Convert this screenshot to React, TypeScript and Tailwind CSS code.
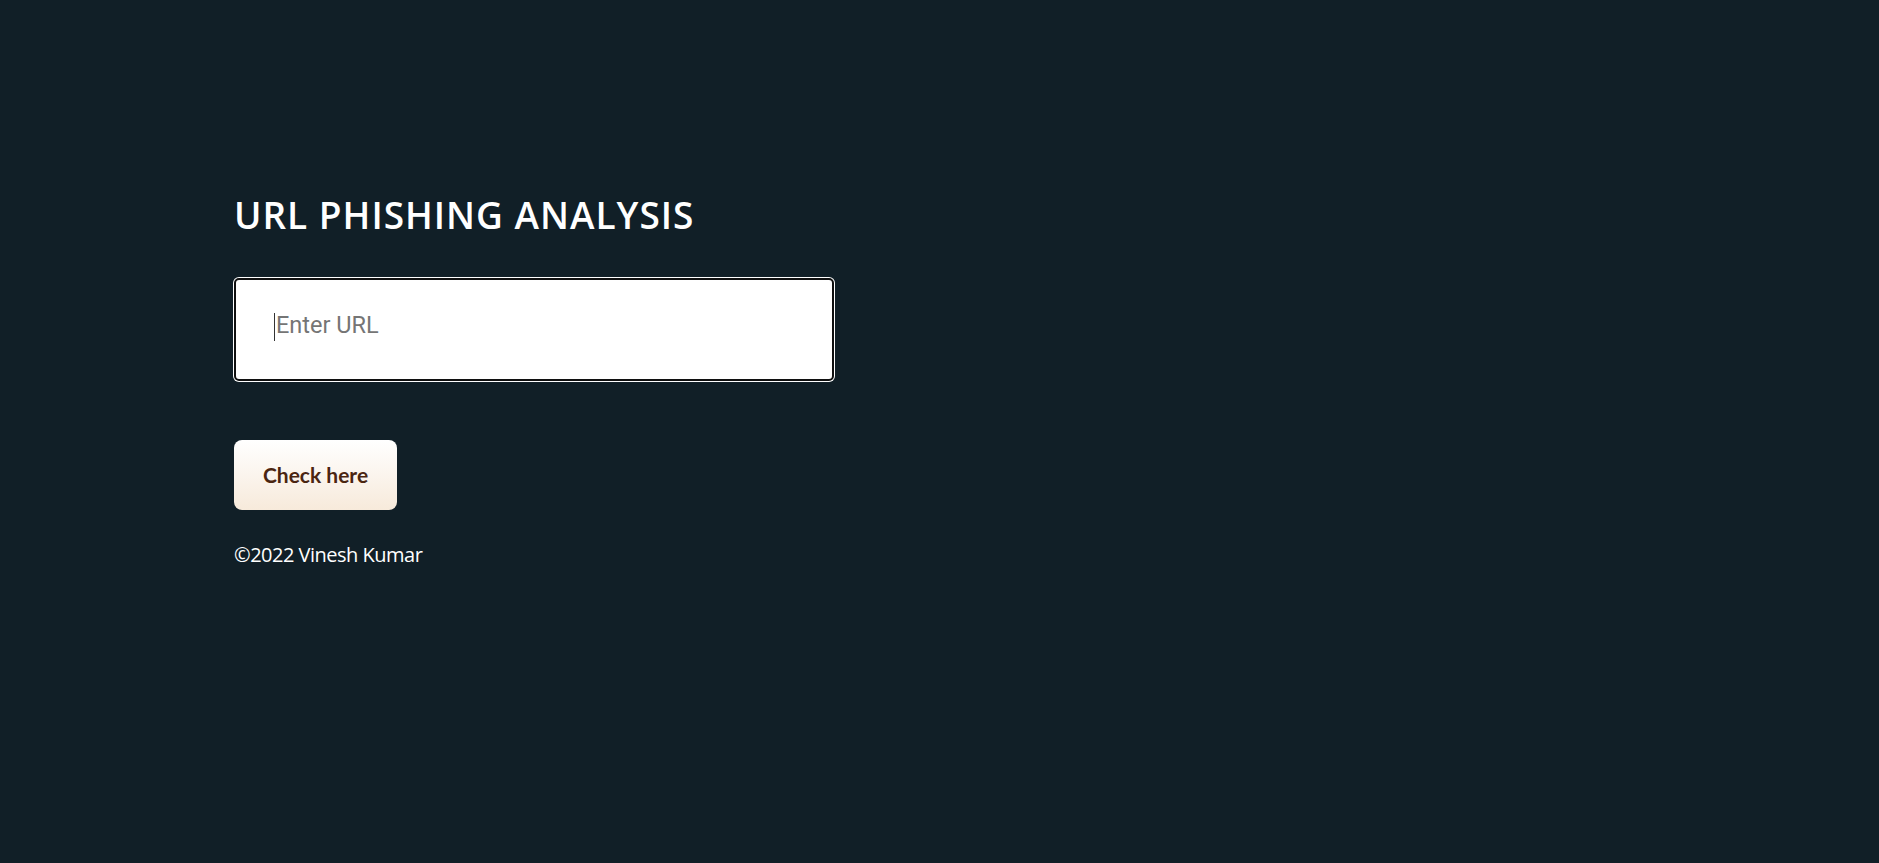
import React from "react";

export default function App() {
  return (
    <div className="min-h-screen w-full bg-[#111f27] pl-[234px] pt-[193px] font-['Open_Sans',sans-serif] text-white">
      <h1 className="text-[37px] font-semibold leading-[44px] tracking-[1px]">
        URL PHISHING ANALYSIS
      </h1>

      <div className="relative mt-[41px] w-[600px]">
        <input
          type="text"
          placeholder="Enter URL"
          className="box-border h-[103px] w-[600px] rounded-[5px] border-2 border-[#101010] bg-white pb-[9px] pl-[40px] font-['Roboto',sans-serif] text-[23.5px] text-black shadow-[0_0_0_1px_#ffffff] outline-none placeholder:text-[#757575]"
        />
        {/* caret */}
        <span className="pointer-events-none absolute left-[40px] top-[35px] h-[28px] w-px bg-[#333]" />
      </div>

      <button className="mt-[59px] flex h-[70px] w-[163px] items-center justify-center rounded-[8px] bg-gradient-to-b from-white to-[#f7eadb] font-['Lato',sans-serif] text-[21px] font-bold text-[#4a2511]">
        Check here
      </button>

      <p className="mt-[33px] text-[20px] leading-[24px] tracking-[-0.5px]">©2022 Vinesh Kumar</p>
    </div>
  );
}
